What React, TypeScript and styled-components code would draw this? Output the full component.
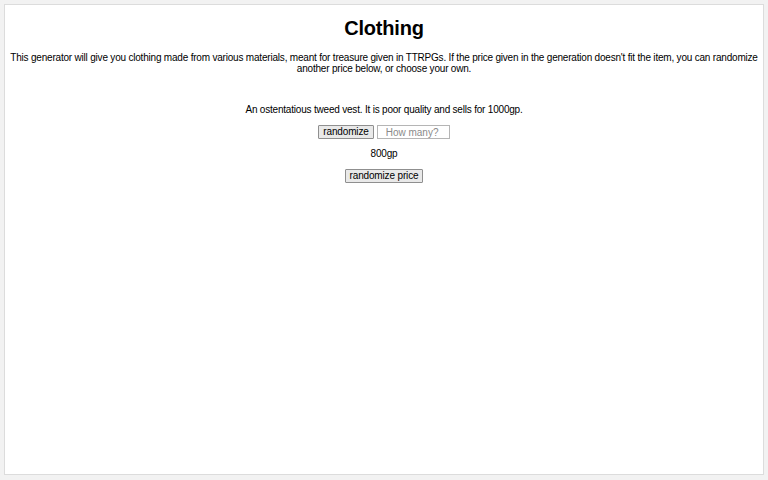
import React from "react";
import styled, { createGlobalStyle } from "styled-components";

const Global = createGlobalStyle`
  html, body { margin: 0; padding: 0; }
  body {
    background: #f2f2f2;
    font-family: "Liberation Sans", Arial, sans-serif;
    color: #000;
  }
`;

const Page = styled.div`
  padding: 4px 4px 5px;
  height: 480px;
  box-sizing: border-box;
`;

const Card = styled.div`
  background: #fff;
  border: 1px solid #dcdcdc;
  height: 100%;
  box-sizing: border-box;
  padding: 12px 2px;
  text-align: center;
  font-size: 10px;
  letter-spacing: -0.2px;
`;

const Title = styled.h1`
  font-size: 20px;
  font-weight: bold;
  letter-spacing: -0.2px;
  margin: 0 0 12px;
  line-height: 23px;
`;

const Intro = styled.p`
  margin: 0 0 30px;
  line-height: 11px;
`;

const Line = styled.p<{ $gap: number }>`
  margin: 0 0 ${(p) => p.$gap}px;
  line-height: 12px;
`;

const Row = styled.div<{ $gap: number }>`
  display: flex;
  justify-content: center;
  gap: 3px;
  margin-bottom: ${(p) => p.$gap}px;
`;

const Button = styled.button`
  font-family: "Liberation Sans", Arial, sans-serif;
  font-size: 10px;
  letter-spacing: -0.15px;
  line-height: 10px;
  height: 14px;
  padding: 1px 4px;
  background: #e9e9e9;
  border: 1px solid #8f8f8f;
  border-radius: 1px;
  color: #000;
`;

const Input = styled.input`
  font-family: "Liberation Sans", Arial, sans-serif;
  font-size: 10px;
  width: 73px;
  height: 14px;
  box-sizing: border-box;
  padding: 0 8px;
  border: 1px solid #b5b5b5;
  border-radius: 0;
  &::placeholder { color: #8a8a8a; }
`;

export default function App() {
  return (
    <>
      <Global />
      <Page>
        <Card>
          <Title>Clothing</Title>
          <Intro>
            This generator will give you clothing made from various materials, meant for treasure given in TTRPGs. If the price given in the generation doesn't fit the item, you can randomize another price below, or choose your own.
          </Intro>
          <Line $gap={9}>An ostentatious tweed vest. It is poor quality and sells for 1000gp.</Line>
          <Row $gap={9}>
            <Button>randomize</Button>
            <Input placeholder="How many?" />
          </Row>
          <Line $gap={9}>800gp</Line>
          <Row $gap={0}>
            <Button>randomize price</Button>
          </Row>
        </Card>
      </Page>
    </>
  );
}
